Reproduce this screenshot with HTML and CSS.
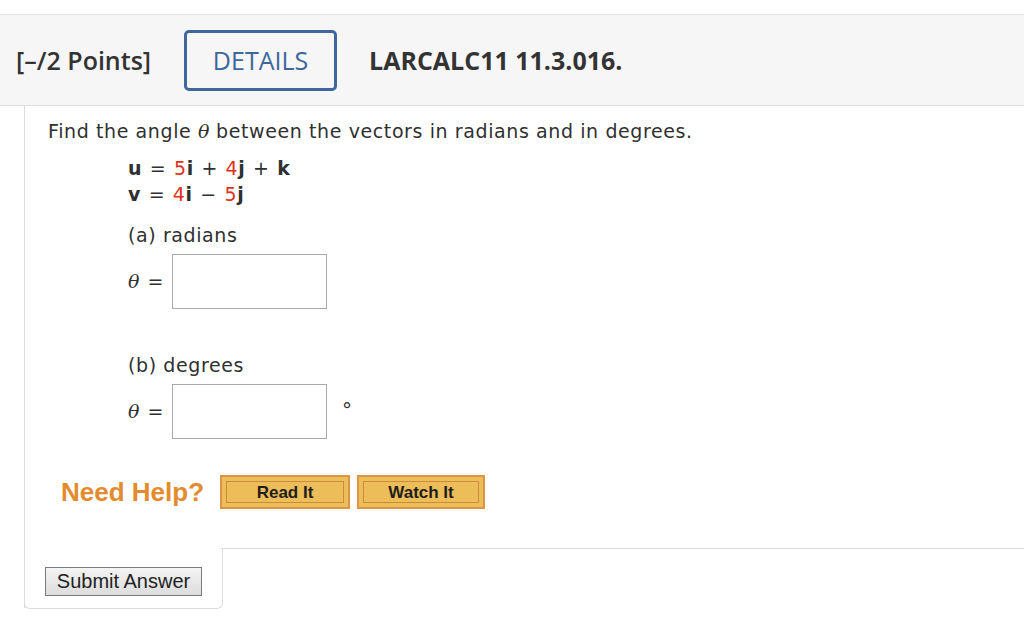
FILE: index.html
```html
<!DOCTYPE html>
<html>
<head>
<meta charset="utf-8">
<link rel="stylesheet" href="styles.css">
</head>
<body>
<div class="header">
  <span class="points">[–/2 Points]</span>
  <span class="details">DETAILS</span>
  <span class="code">LARCALC11 11.3.016.</span>
</div>
<div class="panel">
  <p class="prompt">Find the angle <i class="theta">θ</i> between the vectors in radians and in degrees.</p>
  <div class="vectors">
    <div><b>u</b> = <span class="num">5</span><b>i</b> + <span class="num">4</span><b>j</b> + <b>k</b></div>
    <div><b>v</b> = <span class="num">4</span><b>i</b> − <span class="num">5</span><b>j</b></div>
  </div>
  <div class="part">(a) radians</div>
  <div class="answer"><i class="theta">θ</i> =<span class="box"></span></div>
  <div class="part part-b">(b) degrees</div>
  <div class="answer"><i class="theta">θ</i> =<span class="box"></span><span class="deg">°</span></div>
  <div class="help">
    <span class="need">Need Help?</span>
    <span class="hbtn read">Read It</span>
    <span class="hbtn watch">Watch It</span>
  </div>
  <div class="submit-row">
    <span class="submit">Submit Answer</span>
  </div>
</div>
</body>
</html>
```

FILE: styles.css
```css
html, body { margin: 0; padding: 0; background: #fff; }
body { font-family: "DejaVu Sans", Verdana, sans-serif; color: #333; width: 1024px; height: 628px; overflow: hidden; }
.header {
  margin-top: 14px;
  background: #f6f6f6;
  border-top: 1px solid #e4e4e4;
  border-bottom: 1px solid #dedede;
  display: flex;
  align-items: center;
  font-family: "Open Sans", sans-serif;
  font-size: 25px;
  color: #333;
  box-sizing: border-box;
  height: 92px;
}
.points { margin-left: 16px; font-weight: 600; }
.details {
  margin-left: 33px;
  width: 153px; height: 61px; box-sizing: border-box;
  border: 3px solid #3f679b; border-radius: 5px;
  color: #3d669c; display: flex; align-items: center; justify-content: center;
  font-weight: 400;
}
.code { margin-left: 32px; font-weight: 700; }
.panel {
  position: relative;
  margin-left: 24px;
  border-left: 1px solid #dcdcdc;
  height: 502px;
  box-sizing: border-box;
  font-size: 19px;
  letter-spacing: 0.6px;
  color: #303030;
}
.prompt { margin: 0; padding: 13px 0 0 23px; line-height: 24px; }
.theta { font-family: "DejaVu Serif", serif; font-style: italic; letter-spacing: 0; }
.vectors { margin: 12px 0 0 103px; line-height: 26px; word-spacing: 1px; }
.vectors b { font-weight: bold; }
.num { color: #e2301c; }
.part { margin: 15px 0 0 103px; line-height: 26px; }
.part-b { margin-top: 44px; }
.answer { margin: 6px 0 0 103px; display: flex; align-items: center; height: 54px; }
.answer .theta { margin-right: 8px; }
.box {
  margin-left: 8px;
  width: 155px; height: 55px; box-sizing: border-box;
  border: 1px solid #a9a9a9; background: #fff;
}
.deg { margin-left: 15px; margin-top: -3px; font-size: 20px; }
.help { margin: 37px 0 0 36px; display: flex; align-items: center; letter-spacing: 0; }
.need { font-family: "Liberation Sans", Arial, sans-serif; font-weight: bold; font-size: 26px; color: #e38b2e; }
.hbtn {
  height: 34px; box-sizing: border-box;
  border: 2px solid #db9546; background: #ecbd58;
  box-shadow: inset 0 0 0 4px #ecbd58, inset 0 0 0 5px #c98d3c;
  display: flex; align-items: center; justify-content: center;
  font-family: "Liberation Sans", Arial, sans-serif; font-weight: bold; font-size: 17px; color: #1e1e1e;
  padding-top: 1px;
}
.read { margin-left: 16px; width: 130px; }
.watch { margin-left: 7px; width: 128px; }
.submit-row {
  position: absolute; left: -1px; top: 442px; width: 197px; height: 60px;
  border: 1px solid #dcdcdc; border-top: none;
  border-bottom-left-radius: 6px; border-bottom-right-radius: 6px;
}
.panel::after {
  content: ""; position: absolute; left: 196px; top: 442px; right: 0; border-top: 1px solid #dcdcdc;
}
.submit {
  position: absolute; left: 20px; top: 19px;
  width: 157px; height: 29px; box-sizing: border-box;
  border: 1px solid #7a7a7a;
  background: linear-gradient(#f4f4f4, #dcdcdc);
  font-family: "Liberation Sans", Arial, sans-serif; font-size: 20px; color: #222; letter-spacing: 0;
  display: flex; align-items: center; justify-content: center;
}
```
